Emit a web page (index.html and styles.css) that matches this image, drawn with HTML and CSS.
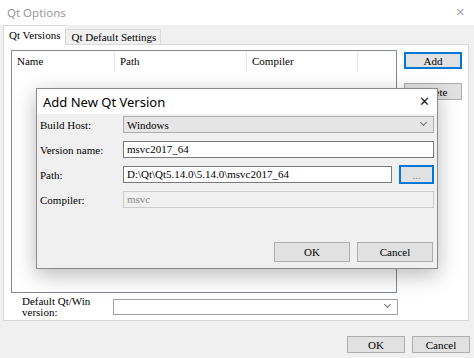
FILE: index.html
```html
<!DOCTYPE html>
<html lang="en">
<head>
  <meta charset="UTF-8">
  <title>Qt Options</title>
  <link rel="stylesheet" href="styles.css">
</head>
<body>

  <div class="window">
    <div class="titlebar">
      <span class="title">Qt Options</span>
      <span class="close">&#x2715;</span>
    </div>

    <div class="tabs">
      <div class="tab active">Qt Versions</div>
      <div class="tab">Qt Default Settings</div>
    </div>

    <div class="pane">
      <div class="pane-main">
        <div class="tree">
          <div class="tree-header">
            <div class="col col-name">Name</div>
            <div class="col col-path">Path</div>
            <div class="col col-compiler">Compiler</div>
            <div class="col col-rest"></div>
          </div>
        </div>
        <div class="side-buttons">
          <button class="btn btn-focus">Add</button>
          <button class="btn">Delete</button>
        </div>
      </div>
      <div class="default-row">
        <label class="default-label">Default Qt/Win<br>version:</label>
        <div class="combo combo-white"><span></span><span class="chevron"></span></div>
      </div>
    </div>

    <div class="footer">
      <button class="btn btn-footer">OK</button>
      <button class="btn btn-footer">Cancel</button>
    </div>
  </div>

  <!-- modal dialog on top of the options window -->
  <div class="dialog">
    <div class="dialog-title">
      <span>Add New Qt Version</span>
      <span class="dialog-close">&#x2715;</span>
    </div>
    <div class="dialog-body">
      <div class="form-row">
        <label>Build Host:</label>
        <div class="combo"><span>Windows</span><span class="chevron"></span></div>
      </div>
      <div class="form-row">
        <label>Version name:</label>
        <div class="field">msvc2017_64</div>
      </div>
      <div class="form-row">
        <label>Path:</label>
        <div class="field">D:\Qt\Qt5.14.0\5.14.0\msvc2017_64</div>
        <button class="btn btn-browse">...</button>
      </div>
      <div class="form-row">
        <label>Compiler:</label>
        <div class="field field-disabled">msvc</div>
      </div>
      <div class="dialog-buttons">
        <button class="btn btn-dialog">OK</button>
        <button class="btn btn-dialog">Cancel</button>
      </div>
    </div>
  </div>

</body>
</html>
```

FILE: styles.css
```css
* {
  box-sizing: border-box;
  margin: 0;
  padding: 0;
}

body {
  position: relative;
  width: 474px;
  height: 358px;
  overflow: hidden;
  background-color: #f0f0f0;
  font-family: 'Liberation Serif', serif;
  font-size: 11px;
  color: #000;
}

.window {
  display: flex;
  flex-direction: column;
  height: 358px;
}

.titlebar {
  height: 25px;
  background-color: #fff;
  display: flex;
  justify-content: space-between;
  align-items: center;
  padding: 0 9px 0 7px;
  font-family: 'Noto Sans', sans-serif;
  font-size: 11.5px;
  color: #9a9a9a;
}

.close {
  font-family: 'DejaVu Sans', sans-serif;
  font-size: 11px;
  color: #a8a8a8;
}

.tabs {
  height: 19px;
  display: flex;
  align-items: flex-end;
  padding-left: 3px;
  position: relative;
  z-index: 1;
}

.tab {
  height: 15px;
  padding: 0 4px 0 5px;
  border: 1px solid #d9d9d9;
  border-bottom: none;
  background-color: #f0f0f0;
  line-height: 14px;
}

.tab.active {
  height: 20px;
  margin-bottom: -1px;
  padding: 0 5px;
  background-color: #fff;
  border-right: none;
  line-height: 18px;
}

.pane {
  margin: 0 5px 0 3px;
  height: 277px;
  background-color: #fff;
  border: 1px solid #d9d9d9;
  padding: 5px 5px 0 7px;
  display: flex;
  flex-direction: column;
}

.pane-main {
  display: flex;
  gap: 7px;
}

.tree {
  width: 386px;
  height: 243px;
  border: 1px solid #828790;
  background-color: #fff;
}

.tree-header {
  display: flex;
  height: 21px;
}

.col {
  padding-left: 5px;
  line-height: 21px;
  border-right: 1px solid #e5e5e5;
}

.col-name { width: 103px; }
.col-path { width: 132px; }
.col-compiler { width: 111px; }
.col-rest { flex: 1; border-right: none; }

.side-buttons {
  display: flex;
  flex-direction: column;
  gap: 14px;
  padding-top: 2px;
}

.btn {
  width: 58px;
  height: 17px;
  background-color: #e1e1e1;
  border: 1px solid #adadad;
  font-family: 'Liberation Serif', serif;
  font-size: 11px;
  color: #000;
}

.btn-focus {
  border-color: #0078d7;
  box-shadow: inset 0 0 0 1px #0078d7;
}

.default-row {
  display: flex;
  align-items: center;
  margin-top: 3px;
  height: 21px;
}

.default-label {
  width: 102px;
  padding-left: 11px;
  line-height: 11px;
}

.combo {
  flex: 1;
  height: 17px;
  display: flex;
  justify-content: space-between;
  align-items: center;
  padding: 0 7px 0 3px;
  background-color: #e5e5e5;
  border: 1px solid #adadad;
}

.combo-white {
  flex: 0 0 285px;
  height: 16px;
  background-color: #fff;
  border-color: #a0a0a0;
}

.chevron {
  width: 5px;
  height: 5px;
  border-right: 1px solid #707070;
  border-bottom: 1px solid #707070;
  transform: translateY(-2px) rotate(45deg);
}

.footer {
  display: flex;
  justify-content: flex-end;
  gap: 7px;
  padding: 15px 4px 0 0;
}

/* dialog */

.dialog {
  position: absolute;
  left: 36px;
  top: 88px;
  width: 402px;
  height: 181px;
  background-color: #f0f0f0;
  border: 1px solid #8c8c8c;
  box-shadow: 0 6px 20px rgba(0, 0, 0, 0.28);
  z-index: 5;
  display: flex;
  flex-direction: column;
}

.dialog-title {
  height: 25px;
  background-color: #fff;
  display: flex;
  justify-content: space-between;
  align-items: center;
  padding: 0 7px 0 6px;
  font-family: 'Noto Sans', sans-serif;
  font-size: 13px;
  color: #000;
}

.dialog-close {
  font-family: 'DejaVu Sans', sans-serif;
  font-size: 13px;
  color: #222;
}

.dialog-body {
  flex: 1;
  padding: 2px 3px 6px 3px;
  display: flex;
  flex-direction: column;
  gap: 8px;
}

.form-row {
  display: flex;
  align-items: center;
  height: 17px;
}

.form-row label {
  width: 83px;
}

.field {
  flex: 1;
  height: 17px;
  padding: 0 3px;
  line-height: 15px;
  background-color: #fff;
  border: 1px solid #7a7a7a;
}

.field-disabled {
  background-color: #f0f0f0;
  border-color: #cccccc;
  color: #8a8a8a;
}

.btn-browse {
  width: 35px;
  height: 19px;
  margin-left: 7px;
  border: 2px solid #0078d7;
  color: #888;
  line-height: 12px;
}

.dialog-buttons {
  margin-top: auto;
  display: flex;
  justify-content: flex-end;
  gap: 7px;
  padding-right: 1px;
}

.btn-dialog {
  width: 76px;
  height: 20px;
}
```
